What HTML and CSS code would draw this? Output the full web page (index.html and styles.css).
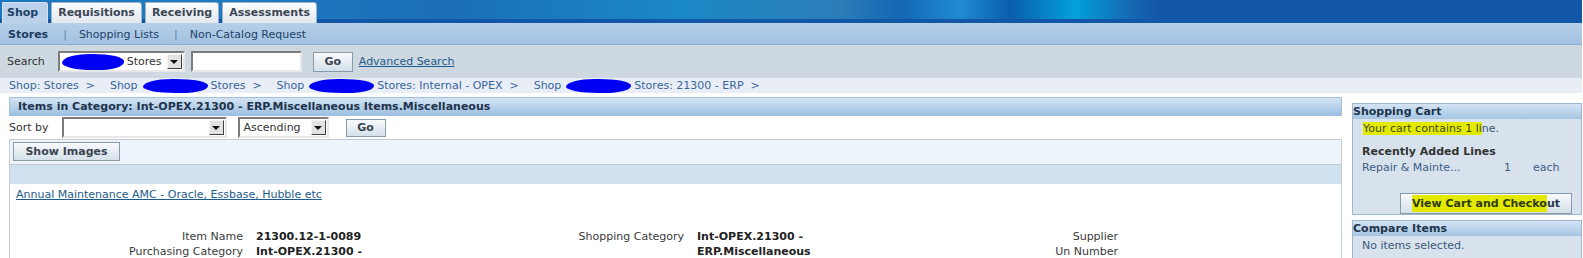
FILE: index.html
```html
<!DOCTYPE html>
<html>
<head>
<meta charset="utf-8">
<title>Shop - Stores</title>
<link rel="stylesheet" href="styles.css">
</head>
<body>
<div class="page">
  <div class="banner">
    <div class="tab tab-on">Shop</div>
    <div class="tab">Requisitions</div>
    <div class="tab">Receiving</div>
    <div class="tab">Assessments</div>
  </div>
  <div class="subnav">
    <span class="sub-on">Stores</span><span class="sep">|</span><span>Shopping Lists</span><span class="sep">|</span><span>Non-Catalog Request</span>
  </div>
  <div class="searchbar">
    <span>Search</span>
    <div class="select sel-store"><span class="blob blob-sel"></span><span class="sel-text">Stores</span><span class="arrow-btn"></span></div>
    <div class="input"></div>
    <button class="btn btn-go">Go</button>
    <a class="link">Advanced Search</a>
  </div>
  <div class="crumbs">
    <span>Shop: Stores</span><span class="gt">&gt;</span>
    <span>Shop</span><span class="blob blob-crumb"></span><span>Stores</span><span class="gt">&gt;</span>
    <span>Shop</span><span class="blob blob-crumb"></span><span>Stores: Internal - OPEX</span><span class="gt">&gt;</span>
    <span>Shop</span><span class="blob blob-crumb"></span><span>Stores: 21300 - ERP</span><span class="gt">&gt;</span>
  </div>
  <div class="content">
    <div class="main">
      <div class="sect-head">Items in Category: Int-OPEX.21300 - ERP.Miscellaneous Items.Miscellaneous</div>
      <div class="sortrow">
        <span>Sort by</span>
        <div class="select sel-sort"><span class="sel-text"></span><span class="arrow-btn"></span></div>
        <div class="select sel-asc"><span class="sel-text">Ascending</span><span class="arrow-btn"></span></div>
        <button class="btn btn-go2">Go</button>
      </div>
      <div class="results">
        <div class="toolbar"><button class="btn btn-img">Show Images</button></div>
        <div class="bluerow"></div>
        <div class="res-body">
          <a class="link item-link">Annual Maintenance AMC - Oracle, Essbase, Hubble etc</a>
          <div class="fields">
            <div class="fgroup fg1">
              <div class="lbl">Item Name</div>
              <div class="val">21300.12-1-0089</div>
              <div class="lbl">Purchasing Category</div>
              <div class="val">Int-OPEX.21300 -</div>
            </div>
            <div class="fgroup fg2">
              <div class="lbl">Shopping Category</div>
              <div class="val">Int-OPEX.21300 - ERP.Miscellaneous</div>
            </div>
            <div class="fgroup fg3">
              <div class="lbl">Supplier</div>
              <div class="val"></div>
              <div class="lbl">Un Number</div>
              <div class="val"></div>
            </div>
          </div>
        </div>
      </div>
    </div>
    <div class="side">
      <div class="box">
        <div class="box-head">Shopping Cart</div>
        <div class="box-body">
          <div class="cart-msg"><span class="hl">Your cart contains 1 li</span>ne.</div>
          <div class="recent">Recently Added Lines</div>
          <div class="line-row"><span>Repair &amp; Mainte...</span><span>1</span><span>each</span></div>
          <div class="cart-btn-row"><button class="btn btn-cart"><span class="hl hl-btn">View Cart and Checko</span>ut</button></div>
        </div>
      </div>
      <div class="box box2">
        <div class="box-head">Compare Items</div>
        <div class="box-body body2">No items selected.</div>
      </div>
    </div>
  </div>
</div>
</body>
</html>
```
FILE: styles.css
```css
* { box-sizing: border-box; }
body {
  margin: 0;
  font-family: "DejaVu Sans", "Noto Sans", sans-serif;
  font-size: 11px;
  color: #333;
  background: #fff;
}
.page { width: 1582px; height: 258px; overflow: hidden; }

/* banner + tabs */
.banner {
  height: 23px;
  display: flex;
  align-items: flex-end;
  gap: 3px;
  padding-left: 2px;
  background:
    linear-gradient(to bottom, rgba(0,0,0,0) 19px, #1256a6 19px),
    linear-gradient(90deg, #1c74bc 0, #1f7cc2 200px, #1b6fb7 450px, #1a88c6 680px, #2c7db8 840px, #1467b3 900px, #1f8cd2 960px, #0b5dae 1010px, #02a0dc 1075px, #1669b3 1130px, #1256a6 1160px, #1256a6 100%);
}
.tab {
  height: 21px;
  padding: 0 6px;
  line-height: 20px;
  font-size: 11px;
  font-weight: bold;
  color: #3b4654;
  background: linear-gradient(#fbfcfd, #e2e8ee);
  border: 1px solid #9fb3c8;
  border-bottom: none;
  border-radius: 1px 3px 0 0;
}
.tab-on {
  background: #bad1e9;
  color: #1f3f68;
  border-color: #d3e2f1;
  padding: 0 9px 0 4px;
}

/* sub navigation */
.subnav {
  height: 22px;
  display: flex;
  align-items: flex-start;
  padding: 5px 0 0 8px;
  background: linear-gradient(#b5cfe8, #a2c2e0);
  border-bottom: 1px solid #8bafd8;
  color: #21406a;
}
.sub-on { font-weight: bold; color: #1d3b62; }
.sep { margin: 0 12px 0 15px; color: #5f82aa; }

/* search bar */
.searchbar {
  height: 33px;
  display: flex;
  align-items: center;
  padding-left: 7px;
  background: #cdd8e0;
  color: #333;
}
.select {
  height: 21px;
  display: flex;
  align-items: center;
  background: #fff;
  border: 2px solid;
  border-color: #7c7c7c #e8e8e8 #e8e8e8 #7c7c7c;
  padding-right: 1px;
  color: #333;
}
.sel-text { flex: 1; margin-left: 4px; white-space: nowrap; }
.arrow-btn {
  width: 15px;
  height: 15px;
  display: flex;
  align-items: center;
  justify-content: center;
  background: #e2e2e2;
  border: 1px solid;
  border-color: #f4f4f4 #404040 #404040 #f4f4f4;
}
.arrow-btn::after {
  content: "";
  border-left: 4px solid transparent;
  border-right: 4px solid transparent;
  border-top: 4px solid #111;
}
.sel-store { width: 127px; margin-left: 13px; }
.blob-sel { width: 62px; height: 16px; margin-left: 2px; }
.sel-store .sel-text { margin-left: 3px; }
.input {
  width: 111px;
  height: 21px;
  margin-left: 6px;
  background: #fff;
  border: 2px solid;
  border-color: #7c7c7c #e8e8e8 #e8e8e8 #7c7c7c;
}
.btn {
  font-family: "DejaVu Sans", "Noto Sans", sans-serif;
  font-size: 11px;
  font-weight: bold;
  color: #3a4550;
  background: linear-gradient(#f8fafc, #d4e0e9);
  border: 1px solid #8899a8;
  padding: 0;
  height: 20px;
  white-space: nowrap;
}
.btn-go { width: 40px; margin-left: 11px; }
.link { color: #1e5b8c; text-decoration: underline; margin-left: 6px; }

/* breadcrumbs */
.crumbs {
  height: 15px;
  display: flex;
  align-items: center;
  padding-left: 9px;
  background: #e9edf5;
  color: #35679e;
  white-space: nowrap;
}
.gt { margin: 0 15px 0 7px; }
.blob {
  display: inline-block;
  background: #0000f4;
  border-radius: 45% 50% 40% 50% / 55% 45% 50% 45%;
}
.blob-crumb { width: 65px; height: 14px; margin: 0 3px 0 5px; }

/* content */
.content { display: flex; gap: 10px; padding-top: 4px; }
.main { width: 1333px; margin-left: 9px; }
.side { width: 230px; margin-top: 6px; }

.sect-head {
  height: 19px;
  line-height: 17px;
  padding-left: 8px;
  border: 1px solid #a2bfdd;
  background: linear-gradient(#d4e4f3, #9dc0e2);
  font-weight: bold;
  color: #1f334b;
  white-space: nowrap;
}
.sortrow { height: 23px; display: flex; align-items: center; }
.sel-sort { width: 165px; margin-left: 13px; }
.sel-asc { width: 91px; margin-left: 11px; }
.btn-go2 { width: 40px; height: 18px; margin-left: 17px; }

.results { border: 1px solid #c2ccd6; border-bottom: none; }
.toolbar { height: 24px; padding: 2px 0 0 3px; background: #edf4fb; }
.btn-img { width: 107px; height: 19px; }
.bluerow { height: 20px; border-top: 1px solid #c2ccd6; background: #cfe0ef; }
.res-body { height: 80px; padding: 3px 0 0 6px; }
.item-link { display: inline-block; margin-left: 0; line-height: 15px; }
.fields {
  display: flex;
  align-items: flex-start;
  margin-top: 27px;
  line-height: 15px;
}
.fgroup { display: grid; }
.fg1 { grid-template-columns: 240px 125px; }
.fg2 { grid-template-columns: 316px 125px; }
.fg3 { grid-template-columns: 309px 150px; }
.lbl { text-align: right; padding-right: 13px; color: #3a3a3a; }
.val { font-weight: bold; color: #222; }

/* side boxes */
.box { border: 1px solid #9cb7d3; background: #d7e2ed; }
.box-head {
  height: 15px;
  line-height: 15px;
  background: linear-gradient(#d4e4f3, #a6c5e3);
  font-weight: bold;
  color: #20344c;
  white-space: nowrap;
}
.box-body { padding: 2px 9px 0 9px; color: #3d5878; }
.cart-msg { line-height: 15px; padding-left: 1px; }
.hl { background: #e3ea00; color: #3d4a1e; }
.recent { margin-top: 8px; line-height: 15px; font-weight: bold; color: #333; }
.line-row {
  display: grid;
  grid-template-columns: 142px 29px auto;
  margin-top: 1px;
  line-height: 15px;
  color: #3d5c86;
}
.cart-btn-row { display: flex; justify-content: flex-end; margin-top: 18px; }
.btn-cart { width: 172px; height: 21px; color: #283848; }
.hl-btn { padding: 2px 0; color: #2d3a14; }
.box2 { margin-top: 5px; }
.body2 { line-height: 15px; padding-top: 2px; height: 30px; }
```
